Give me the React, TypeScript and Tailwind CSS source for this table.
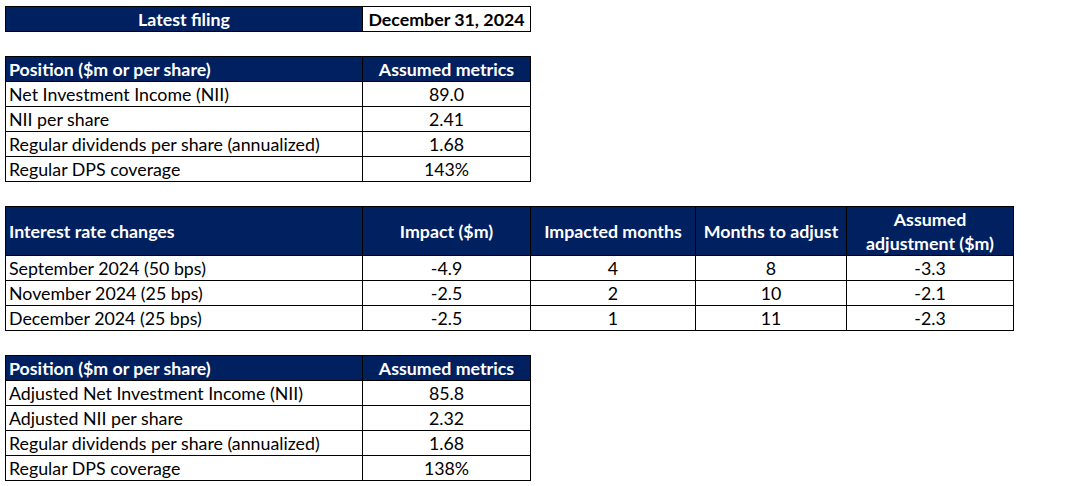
type Align = "left" | "center"

const font = { fontFamily: "Lato, 'Open Sans', sans-serif" }

const colW = ["w-[357px]", "w-[168px]", "w-[165px]", "w-[151px]", "w-[167px]"]

function Cell({
  children,
  w,
  head,
  align = "center",
  tall,
  bold,
}: {
  children?: React.ReactNode
  w: string
  head?: boolean
  align?: Align
  tall?: boolean
  bold?: boolean
}) {
  return (
    <div
      className={[
        w,
        tall ? "h-[49px]" : "h-[25px]",
        "flex shrink-0 items-center overflow-hidden whitespace-nowrap border-r border-b border-black px-[3px] text-[17.8px] leading-[20px]",
        head ? "bg-[#002060] font-bold text-white" : "bg-white text-black",
        bold ? "font-bold" : "",
        align === "center" ? "justify-center text-center" : "justify-start",
      ].join(" ")}
    >
      {children}
    </div>
  )
}

function Row({ children }: { children: React.ReactNode }) {
  return <div className="flex">{children}</div>
}

function Table({ children }: { children: React.ReactNode }) {
  return <div className="flex w-fit flex-col border-t border-l border-black">{children}</div>
}

function MetricsTable({ rows }: { rows: [string, string][] }) {
  return (
    <Table>
      <Row>
        <Cell w={colW[0]} head align="left">
          Position ($m or per share)
        </Cell>
        <Cell w={colW[1]} head>
          Assumed metrics
        </Cell>
      </Row>
      {rows.map(([label, value]) => (
        <Row key={label}>
          <Cell w={colW[0]} align="left">
            {label}
          </Cell>
          <Cell w={colW[1]}>{value}</Cell>
        </Row>
      ))}
    </Table>
  )
}

const rateRows = [
  ["September 2024 (50 bps)", "-4.9", "4", "8", "-3.3"],
  ["November 2024 (25 bps)", "-2.5", "2", "10", "-2.1"],
  ["December 2024 (25 bps)", "-2.5", "1", "11", "-2.3"],
]

export default function App() {
  return (
    <div className="min-h-[486px] w-[1067px] bg-white pt-[6px] pl-[5px]" style={font}>
      <div className="flex flex-col gap-[24px]">
        <Table>
          <Row>
            <Cell w={colW[0]} head>
              Latest filing
            </Cell>
            <Cell w={colW[1]} bold>
              December 31, 2024
            </Cell>
          </Row>
        </Table>

        <MetricsTable
          rows={[
            ["Net Investment Income (NII)", "89.0"],
            ["NII per share", "2.41"],
            ["Regular dividends per share (annualized)", "1.68"],
            ["Regular DPS coverage", "143%"],
          ]}
        />

        <Table>
          <Row>
            <Cell w={colW[0]} head align="left" tall>
              Interest rate changes
            </Cell>
            <Cell w={colW[1]} head tall>
              Impact ($m)
            </Cell>
            <Cell w={colW[2]} head tall>
              Impacted months
            </Cell>
            <Cell w={colW[3]} head tall>
              Months to adjust
            </Cell>
            <Cell w={colW[4]} head tall>
              <span className="leading-[24px]">
                Assumed
                <br />
                adjustment ($m)
              </span>
            </Cell>
          </Row>
          {rateRows.map((r) => (
            <Row key={r[0]}>
              {r.map((v, i) => (
                <Cell key={i} w={colW[i]} align={i === 0 ? "left" : "center"}>
                  {v}
                </Cell>
              ))}
            </Row>
          ))}
        </Table>

        <MetricsTable
          rows={[
            ["Adjusted Net Investment Income (NII)", "85.8"],
            ["Adjusted NII per share", "2.32"],
            ["Regular dividends per share (annualized)", "1.68"],
            ["Regular DPS coverage", "138%"],
          ]}
        />
      </div>
    </div>
  )
}
